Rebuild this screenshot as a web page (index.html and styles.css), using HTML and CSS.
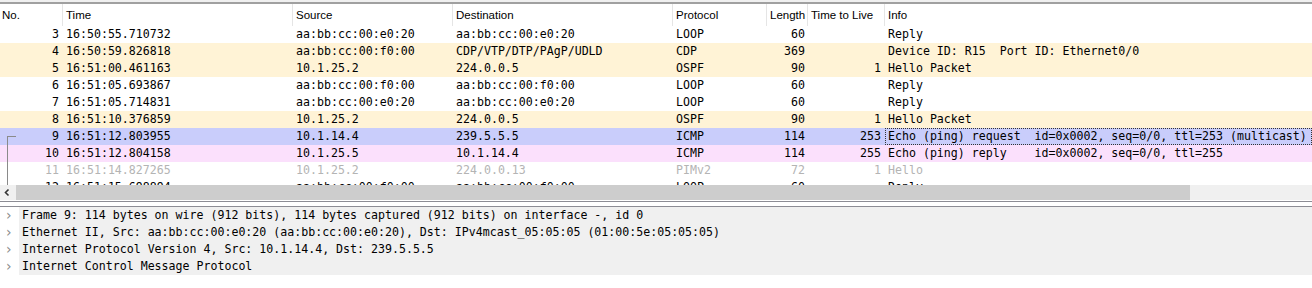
FILE: index.html
```html
<!DOCTYPE html>
<html>
<head>
<meta charset="utf-8">
<link rel="stylesheet" href="styles.css">
</head>
<body>
<div class="app">
  <div class="topline"></div>
  <div class="list">
    <div class="row head">
      <div class="c">No.</div>
      <div class="c sep">Time</div>
      <div class="c sep">Source</div>
      <div class="c sep">Destination</div>
      <div class="c sep">Protocol</div>
      <div class="c sep">Length</div>
      <div class="c sep">Time to Live</div>
      <div class="c sep">Info</div>
    </div>
    <div class="rows">
      <div class="row">
        <div class="c r no">3</div><div class="c">16:50:55.710732</div><div class="c">aa:bb:cc:00:e0:20</div><div class="c">aa:bb:cc:00:e0:20</div><div class="c">LOOP</div><div class="c r len">60</div><div class="c r ttl"></div><div class="c">Reply</div>
      </div>
      <div class="row route">
        <div class="c r no">4</div><div class="c">16:50:59.826818</div><div class="c">aa:bb:cc:00:f0:00</div><div class="c">CDP/VTP/DTP/PAgP/UDLD</div><div class="c">CDP</div><div class="c r len">369</div><div class="c r ttl"></div><div class="c">Device ID: R15  Port ID: Ethernet0/0</div>
      </div>
      <div class="row route">
        <div class="c r no">5</div><div class="c">16:51:00.461163</div><div class="c">10.1.25.2</div><div class="c">224.0.0.5</div><div class="c">OSPF</div><div class="c r len">90</div><div class="c r ttl">1</div><div class="c">Hello Packet</div>
      </div>
      <div class="row">
        <div class="c r no">6</div><div class="c">16:51:05.693867</div><div class="c">aa:bb:cc:00:f0:00</div><div class="c">aa:bb:cc:00:f0:00</div><div class="c">LOOP</div><div class="c r len">60</div><div class="c r ttl"></div><div class="c">Reply</div>
      </div>
      <div class="row">
        <div class="c r no">7</div><div class="c">16:51:05.714831</div><div class="c">aa:bb:cc:00:e0:20</div><div class="c">aa:bb:cc:00:e0:20</div><div class="c">LOOP</div><div class="c r len">60</div><div class="c r ttl"></div><div class="c">Reply</div>
      </div>
      <div class="row route">
        <div class="c r no">8</div><div class="c">16:51:10.376859</div><div class="c">10.1.25.2</div><div class="c">224.0.0.5</div><div class="c">OSPF</div><div class="c r len">90</div><div class="c r ttl">1</div><div class="c">Hello Packet</div>
      </div>
      <div class="row selected">
        <div class="c r no"><span class="rel rel-start"></span>9</div><div class="c">16:51:12.803955</div><div class="c">10.1.14.4</div><div class="c">239.5.5.5</div><div class="c">ICMP</div><div class="c r len">114</div><div class="c r ttl">253</div><div class="c focus">Echo (ping) request  id=0x0002, seq=0/0, ttl=253 (multicast)</div>
      </div>
      <div class="row icmp">
        <div class="c r no"><span class="rel rel-mid"></span>10</div><div class="c">16:51:12.804158</div><div class="c">10.1.25.5</div><div class="c">10.1.14.4</div><div class="c">ICMP</div><div class="c r len">114</div><div class="c r ttl">255</div><div class="c">Echo (ping) reply    id=0x0002, seq=0/0, ttl=255</div>
      </div>
      <div class="row faded">
        <div class="c r no"><span class="rel rel-mid"></span>11</div><div class="c">16:51:14.827265</div><div class="c">10.1.25.2</div><div class="c">224.0.0.13</div><div class="c">PIMv2</div><div class="c r len">72</div><div class="c r ttl">1</div><div class="c">Hello</div>
      </div>
      <div class="row">
        <div class="c r no"><span class="rel rel-mid"></span>12</div><div class="c">16:51:15.698894</div><div class="c">aa:bb:cc:00:f0:00</div><div class="c">aa:bb:cc:00:f0:00</div><div class="c">LOOP</div><div class="c r len">60</div><div class="c r ttl"></div><div class="c">Reply</div>
      </div>
    </div>
  </div>
  <div class="hscroll">
    <div class="arrow">
      <svg width="16" height="15" viewBox="0 0 16 15"><path d="M8.5 4.5 L5.5 7.5 L8.5 10.5" fill="none" stroke="#333" stroke-width="1.6"/></svg>
    </div>
    <div class="thumb"></div>
    <div class="track"></div>
  </div>
  <div class="splitter"></div>
  <div class="details">
    <div class="drow"><div class="chev">&#x203A;</div><div class="dtext">Frame 9: 114 bytes on wire (912 bits), 114 bytes captured (912 bits) on interface -, id 0</div></div>
    <div class="drow"><div class="chev">&#x203A;</div><div class="dtext">Ethernet II, Src: aa:bb:cc:00:e0:20 (aa:bb:cc:00:e0:20), Dst: IPv4mcast_05:05:05 (01:00:5e:05:05:05)</div></div>
    <div class="drow"><div class="chev">&#x203A;</div><div class="dtext">Internet Protocol Version 4, Src: 10.1.14.4, Dst: 239.5.5.5</div></div>
    <div class="drow"><div class="chev">&#x203A;</div><div class="dtext">Internet Control Message Protocol</div></div>
  </div>
</div>
</body>
</html>
```
FILE: styles.css
```css
html, body {
  margin: 0;
  padding: 0;
  background: #ffffff;
}
.app {
  width: 1312px;
  height: 288px;
  overflow: hidden;
  display: flex;
  flex-direction: column;
}
.topline {
  height: 2px;
  background: #f0f0f0;
  border-bottom: 2px solid #a0a0a0;
}
.list {
  height: 181px;
  overflow: hidden;
  display: flex;
  flex-direction: column;
}
.row {
  display: grid;
  grid-template-columns: 62px 230px 160px 220px 94px 41px 77px 1fr;
  height: 17px;
  line-height: 17px;
  font-family: "DejaVu Sans Mono", "Liberation Mono", monospace;
  font-size: 11.6px;
  color: #000;
  white-space: pre;
}
.c {
  padding-left: 4px;
  overflow: hidden;
  position: relative;
}
.c.r {
  text-align: right;
  padding-left: 0;
  padding-right: 3px;
}
.c.len {
  padding-right: 2px;
}
.row.head {
  height: 22px;
  line-height: 22px;
  font-family: "Liberation Sans", Arial, sans-serif;
  font-size: 11.5px;
  background: #fff;
}
.row.head .c:first-child {
  padding-left: 2px;
}
.row.head .sep {
  border-left: 1px solid #e5e5e5;
  padding-left: 3px;
}
.rows {
  display: flex;
  flex-direction: column;
}
.route {
  background: #fff3d6;
}
.selected {
  background: #c9cdfb;
}
.icmp {
  background: #fbe0fc;
}
.faded {
  color: #b4b4b4;
}
.focus {
  outline: 1px dotted #333;
  outline-offset: -1px;
  padding-left: 3px;
  margin-left: 1px;
}
.rel {
  position: absolute;
  left: 7px;
  width: 8px;
  border-left: 1px solid #8a8a8a;
}
.rel-start {
  top: 8px;
  bottom: 0;
  border-top: 1px solid #8a8a8a;
}
.rel-mid {
  top: 0;
  bottom: 0;
}
.hscroll {
  height: 15px;
  display: flex;
  background: #f0f0f0;
}
.arrow {
  width: 16px;
  height: 15px;
  background: #f0f0f0;
}
.arrow svg {
  display: block;
}
.thumb {
  width: 1174px;
  background: #cdcdcd;
}
.track {
  flex: 1;
  background: #f0f0f0;
}
.splitter {
  margin-top: 1px;
  height: 4px;
  border-top: 1px solid #8c8c94;
  border-bottom: 1px solid #8c8c94;
}
.details {
  display: flex;
  flex-direction: column;
}
.drow {
  display: flex;
  height: 17px;
  line-height: 17px;
  font-family: "DejaVu Sans Mono", "Liberation Mono", monospace;
  font-size: 11.6px;
  white-space: pre;
}
.chev {
  width: 19px;
  padding-left: 6px;
  box-sizing: border-box;
  color: #8a8a8a;
  font-family: "DejaVu Sans", sans-serif;
  font-size: 14px;
  background: #fff;
}
.dtext {
  flex: 1;
  background: #f0f0f0;
  padding-left: 3px;
  color: #000;
}
```
